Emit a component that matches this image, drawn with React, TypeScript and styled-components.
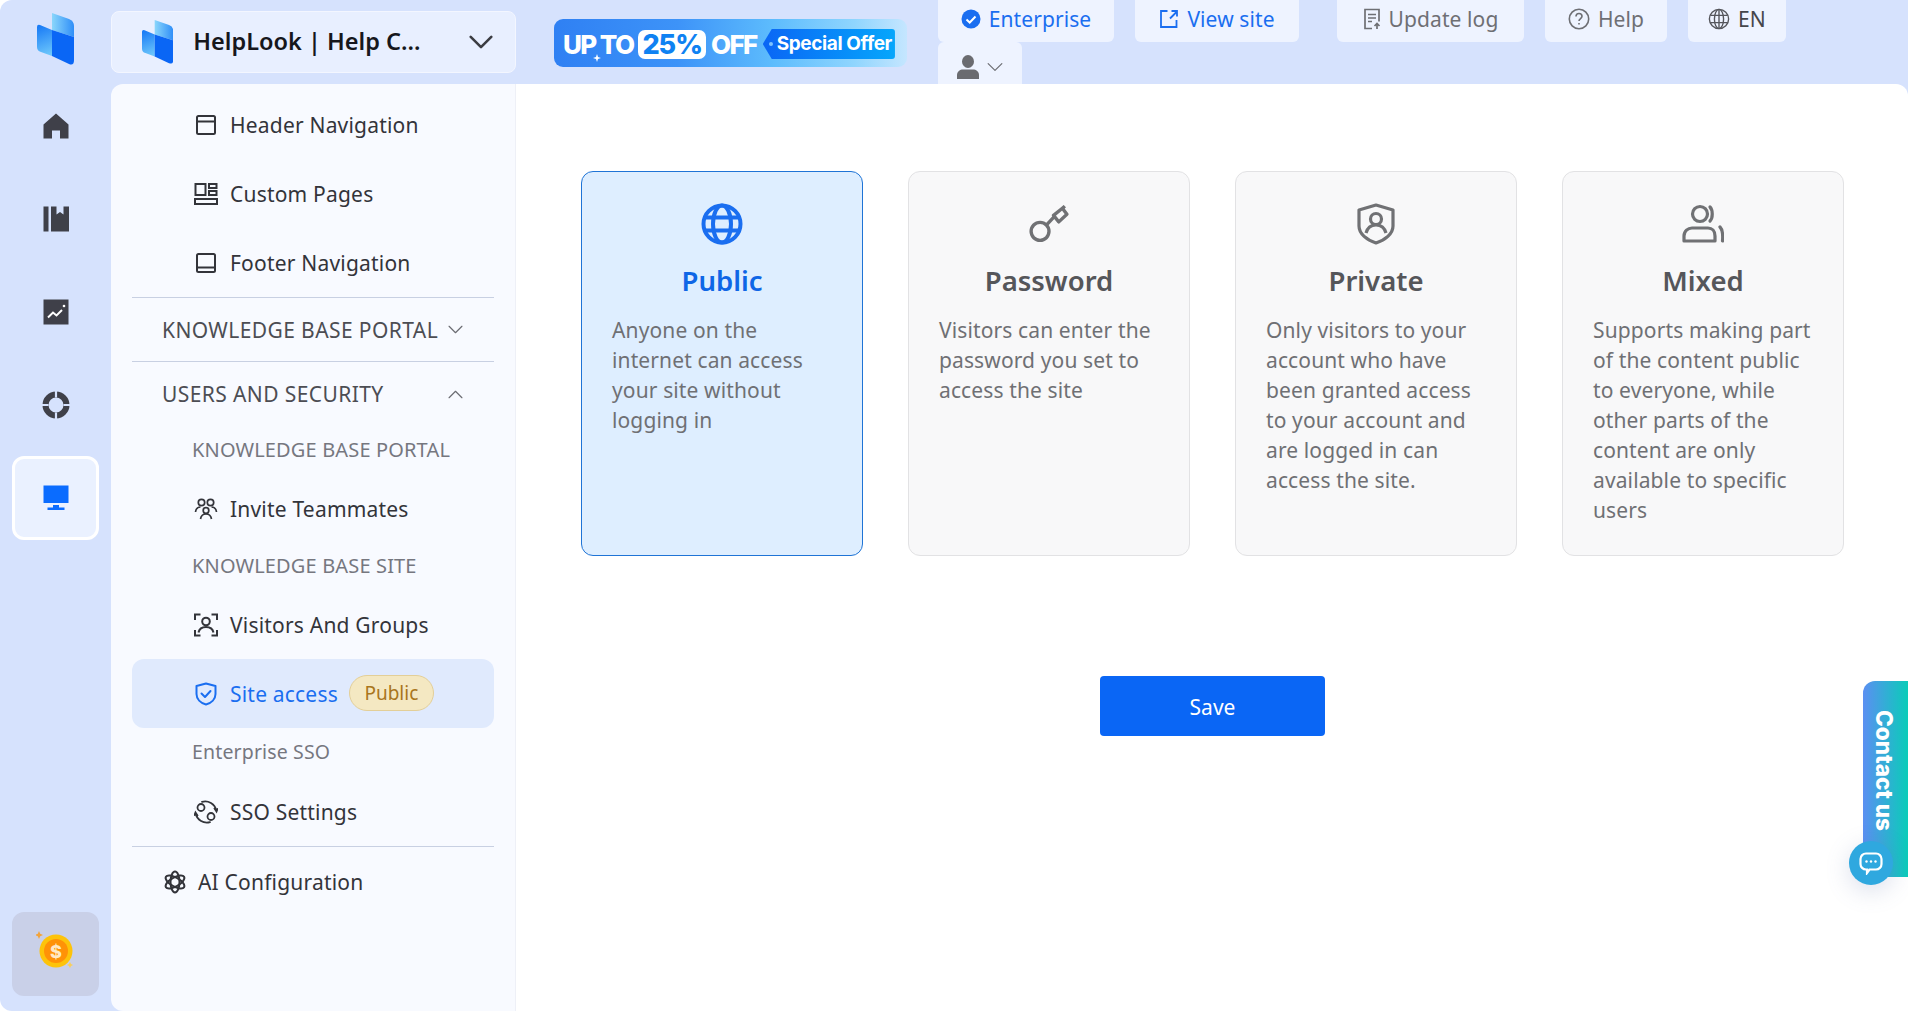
import React from "react";
import styled, { createGlobalStyle } from "styled-components";

const GlobalStyle = createGlobalStyle`
    html, body, #root {
        margin: 0;
        padding: 0;
        height: 100%;
        background: #fff;
    }
    body {
        font-family: "Noto Sans", "Open Sans", Arial, sans-serif;
        color: #33343a;
        overflow: hidden;
    }
`;

const Page = styled.div`
    display: grid;
    grid-template-columns: 111px 405px 1fr;
    grid-template-rows: 84px 927px;
    height: 1011px;
    background: #d6e2fd;
    border-radius: 12px 0 0 12px;
    overflow: hidden;
`;

const LogoCell = styled.div`
    display: flex;
    justify-content: center;
    align-items: flex-start;
    padding-top: 13px;
`;

const BrandCell = styled.div`
    padding: 11px 0;
`;

const BrandBox = styled.div`
    display: flex;
    align-items: center;
    height: 100%;
    box-sizing: border-box;
    padding: 0 22px 0 30px;
    background: #e8efff;
    border: 1px solid #f3f6ff;
    border-radius: 8px;
`;

const BrandName = styled.span`
    flex: 1;
    margin: 0 0 2px 20px;
    font-size: 23.5px;
    font-weight: 600;
    color: #16171c;
    white-space: nowrap;
`;

const HeaderCell = styled.div`
    display: flex;
    align-items: flex-start;
`;

const Banner = styled.div`
    display: flex;
    align-items: center;
    gap: 5px;
    flex: none;
    width: 353px;
    height: 48px;
    margin: 19px 0 0 38px;
    padding: 2px 0 0 9px;
    box-sizing: border-box;
    border-radius: 9px;
    background: linear-gradient(90deg, #2f80f3 0%, #3d93f8 35%, #5dbcfd 62%, #8fd5fe 85%, #c5e6ff 100%);
    font-family: Inter, "Noto Sans", sans-serif;
    font-weight: 800;
    color: #fff;
`;

const BannerWord = styled.span`
    position: relative;
    font-size: 26px;
    letter-spacing: -1.6px;
    white-space: nowrap;
`;

const SparkleMark = styled.svg`
    position: absolute;
    left: 30px;
    top: 25px;
`;

const BannerPill = styled.span`
    padding: 1px 4px;
    background: #fff;
    border-radius: 7px;
    color: #0f82f2;
    font-size: 27px;
    line-height: 27px;
    letter-spacing: -1px;
`;

const BannerTag = styled.span`
    position: relative;
    margin-left: 1px;
    padding: 0 3px 0 14px;
    height: 30px;
    line-height: 30px;
    font-size: 19px;
    font-weight: 700;
    letter-spacing: -0.4px;
    white-space: nowrap;
    background: linear-gradient(90deg, #0a66f5, #06a6fb);
    clip-path: polygon(9px 0, 100% 0, 100% 100%, 9px 100%, 0 50%);
    border-radius: 3px;

    &::before {
        content: "";
        position: absolute;
        left: 6px;
        top: 13px;
        width: 4px;
        height: 4px;
        border-radius: 50%;
        background: #7cc4ff;
    }
`;

const Tabs = styled.div`
    display: flex;
    flex-wrap: wrap;
    width: 900px;
    margin-left: 31px;
`;

const Tab = styled.a<{ $tone?: "blue" | "gray" | "dark"; $gapRight: number; $width: number; $user?: boolean }>`
    display: flex;
    align-items: center;
    justify-content: center;
    gap: 8px;
    width: ${(p) => p.$width}px;
    height: 42px;
    box-sizing: border-box;
    padding: ${(p) => (p.$user ? "8px 0 0" : "0 0 4px")};
    margin-right: ${(p) => p.$gapRight}px;
    background: #eef3ff;
    border-radius: ${(p) => (p.$user ? "6px 6px 0 0" : "0 0 6px 6px")};
    font-size: 21px;
    letter-spacing: 0.1px;
    white-space: nowrap;
    color: ${(p) => (p.$tone === "blue" ? "#1a6ef0" : p.$tone === "dark" ? "#45464b" : "#6e6f74")};
`;

const Rail = styled.nav`
    display: flex;
    flex-direction: column;
    align-items: center;
    gap: 9px;
    padding-bottom: 15px;
`;

const RailItem = styled.div<{ $active?: boolean }>`
    display: flex;
    align-items: center;
    justify-content: center;
    width: 87px;
    height: 84px;
    box-sizing: border-box;
    border-radius: 12px;
    border: 3px solid ${(p) => (p.$active ? "#fff" : "transparent")};
    background: ${(p) => (p.$active ? "#eaf1ff" : "transparent")};
`;

const CoinItem = styled(RailItem)`
    margin-top: auto;
    padding-bottom: 6px;
    background: #c9d0e8;
    border-color: #c9d0e8;
`;

const SidePanel = styled.aside`
    box-sizing: border-box;
    padding: 6px 21px 0;
    background: #f8faff;
    border-right: 1px solid #eef0f7;
    border-radius: 12px 0 0 12px;
`;

const NavRow = styled.div<{ $active?: boolean; $top?: boolean }>`
    display: flex;
    align-items: center;
    height: 69px;
    padding-left: ${(p) => (p.$top ? "31px" : "62px")};
    border-radius: 12px;
    font-size: 21px;
    letter-spacing: 0.2px;
    white-space: nowrap;
    background: ${(p) => (p.$active ? "#e0eafd" : "transparent")};
    color: ${(p) => (p.$active ? "#1a6ef0" : "#33343a")};
`;

const NavIcon = styled.span<{ $gap: number }>`
    display: flex;
    width: 24px;
    margin-right: ${(p) => p.$gap}px;
    justify-content: center;
    flex: none;
`;

const SectionRow = styled.div<{ $height: number }>`
    display: flex;
    align-items: center;
    height: ${(p) => p.$height}px;
    padding-left: 30px;
    font-size: 21px;
    letter-spacing: 0.4px;
    color: #4c4d53;
    white-space: nowrap;
`;

const SectionChevron = styled.span`
    position: absolute;
    left: 448px;
    display: flex;
`;

const SubLabel = styled.div<{ $height: number; $size?: number }>`
    display: flex;
    align-items: center;
    height: ${(p) => p.$height}px;
    padding: 0 0 2px 60px;
    box-sizing: border-box;
    font-size: ${(p) => p.$size ?? 20}px;
    letter-spacing: 0.15px;
    color: #76777f;
    white-space: nowrap;
`;

const Divider = styled.div`
    height: 1px;
    background: #c8d0e2;
`;

const Badge = styled.span`
    display: inline-flex;
    align-items: center;
    margin: 0 0 1px 11px;
    height: 36px;
    padding: 0 14.5px;
    border-radius: 18px;
    background: #f4e8c2;
    border: 1px solid #e3cf98;
    box-sizing: border-box;
    font-size: 19px;
    letter-spacing: 0;
    color: #a9761c;
`;

const Main = styled.main`
    display: flex;
    flex-direction: column;
    align-items: center;
    padding: 87px 64px 0 65px;
    background: #fff;
    border-radius: 0 12px 0 0;
`;

const CardGrid = styled.div`
    display: grid;
    grid-template-columns: repeat(4, 1fr);
    gap: 45px;
    width: 100%;
`;

const Card = styled.div<{ $active?: boolean }>`
    display: flex;
    flex-direction: column;
    align-items: center;
    height: 385px;
    box-sizing: border-box;
    padding: 30px 30px 0;
    border-radius: 12px;
    border: 1px solid ${(p) => (p.$active ? "#1f74d6" : "#e2e2e4")};
    background: ${(p) => (p.$active ? "#deeeff" : "#f8f8f9")};
`;

const CardIcon = styled.div`
    display: flex;
    align-items: center;
    justify-content: center;
    height: 44px;
`;

const CardTitle = styled.h3<{ $active?: boolean }>`
    margin: 16px 0 15px;
    font-size: 27.5px;
    line-height: 38px;
    font-weight: 600;
    color: ${(p) => (p.$active ? "#0e66e6" : "#55565a")};
`;

const CardText = styled.p`
    width: 100%;
    margin: 0;
    font-size: 21px;
    letter-spacing: 0.12px;
    line-height: 30px;
    color: #6f7074;
`;

const SaveButton = styled.button`
    width: 225px;
    height: 60px;
    margin-top: 120px;
    padding-top: 2px;
    border: 0;
    border-radius: 4px;
    background: #0a66f5;
    color: #fff;
    font: inherit;
    font-size: 21px;
`;

const ContactTab = styled.div`
    position: fixed;
    right: 0;
    top: 681px;
    width: 45px;
    height: 196px;
    box-sizing: border-box;
    padding: 29px 3px 0 0;
    display: flex;
    justify-content: flex-start;
    align-items: center;
    border-radius: 12px 0 0 12px;
    background: linear-gradient(90deg, #5b8ff2, #0accb9);
    font-family: Inter, sans-serif;
    font-size: 22.5px;
    font-weight: 800;
    color: #fff;
    writing-mode: vertical-rl;
    white-space: nowrap;
    line-height: 42px;
`;

const ContactBubble = styled.div`
    position: fixed;
    left: 1849px;
    top: 841px;
    width: 44px;
    height: 44px;
    display: flex;
    align-items: center;
    justify-content: center;
    border-radius: 50%;
    background: #2fa8df;
    box-shadow: 0 6px 24px rgba(90, 110, 170, 0.22);
`;

type IconProps = { c?: string };

const LogoMark = ({ h }: { h: number }) => (
    <svg width={(h * 37) / 52} height={h} viewBox="0 0 37 52">
        <defs>
            <linearGradient id={`lg-a-${h}`} x1="0" y1="0" x2="1" y2="0">
                <stop offset="0" stopColor="#8ad6fb" />
                <stop offset="1" stopColor="#2f8ef8" />
            </linearGradient>
            <linearGradient id={`lg-b-${h}`} x1="0.4" y1="0" x2="0.6" y2="1">
                <stop offset="0" stopColor="#1a7cf6" />
                <stop offset="1" stopColor="#6cc6fb" />
            </linearGradient>
        </defs>
        <path d="M15 0 32 6Q37 8 37 13V24L15 17z" fill={`url(#lg-a-${h})`} />
        <path d="M0 14Q0 11 3 12L15 17V43L4 39Q0 38 0 34z" fill={`url(#lg-b-${h})`} />
        <path d="M15 17 37 24V47Q37 53 32 51L15 43z" fill="#0a66f5" />
    </svg>
);

const Chevron = ({ size = 14, c = "#55565c", up = false, w = 1.4 }: IconProps & { size?: number; up?: boolean; w?: number }) => (
    <svg width={size} height={size} viewBox="0 0 14 14" fill="none" stroke={c} strokeWidth={w} strokeLinecap="round" strokeLinejoin="round">
        <path d={up ? "M1 10 7 4l6 6" : "M1 4l6 6 6-6"} />
    </svg>
);

const line = "#33343a";

const HeaderNavIcon = () => (
    <svg width="22" height="22" viewBox="0 0 22 22" fill="none" stroke={line} strokeWidth="2">
        <rect x="2" y="2" width="18" height="18" rx="1.5" />
        <path d="M2 7.5h18" />
    </svg>
);
const CustomPagesIcon = () => (
    <svg width="24" height="24" viewBox="0 0 24 24" fill="none" stroke={line} strokeWidth="2">
        <rect x="1.5" y="2" width="10" height="11" />
        <rect x="15" y="2" width="7.5" height="4" />
        <rect x="15" y="9" width="7.5" height="4" />
        <rect x="1" y="17" width="22" height="5" />
    </svg>
);
const FooterNavIcon = () => (
    <svg width="22" height="22" viewBox="0 0 22 22" fill="none" stroke={line} strokeWidth="2">
        <rect x="2" y="2" width="18" height="18" rx="1.5" />
        <path d="M2 15.5h18" />
    </svg>
);
const TeamIcon = () => (
    <svg width="24" height="24" viewBox="0 0 24 24" fill="none" stroke={line} strokeWidth="1.7">
        <circle cx="7.5" cy="5.5" r="3.2" />
        <circle cx="16.5" cy="5.5" r="3.2" />
        <circle cx="12" cy="13.5" r="2.8" />
        <path d="M1.5 15c.4-3 2.6-5 5-5M22.5 15c-.4-3-2.6-5-5-5M6.5 22c.5-3.200 2.800-5 5.500-5s5 1.800 5.500 5" />
    </svg>
);
const VisitorsIcon = () => (
    <svg width="24" height="24" viewBox="0 0 24 24" fill="none" stroke={line} strokeWidth="2">
        <path d="M1 7V1.500h5.500M17.500 1.500H23V7M23 17v5.500h-5.500M6.500 22.500H1V17" />
        <circle cx="12" cy="8.500" r="3.800" />
        <path d="M4.500 19.500c.8-3.800 3.800-5.500 7.500-5.500s6.700 1.700 7.500 5.500" />
    </svg>
);
const SiteAccessIcon = () => (
    <svg width="22" height="24" viewBox="0 0 22 24" fill="none" stroke="#1a6ef0" strokeWidth="2" strokeLinejoin="round" strokeLinecap="round">
        <path d="M11 1.500 20.500 4v8c0 5-4 9-9.500 10.500C5.500 21 1.500 17 1.500 12V4z" />
        <path d="M6.500 11.500 10 15l5.500-6" />
    </svg>
);
const SsoIcon = () => (
    <svg width="24" height="24" viewBox="0 0 24 24" fill="none" stroke={line} strokeWidth="1.8" strokeLinecap="round">
        <circle cx="7" cy="7.500" r="3.500" />
        <circle cx="17" cy="16.500" r="3.500" />
        <path d="M8 1.800C14 0 21 3.500 22.500 11M16 22.200C10 24 3 20.500 1.500 13M20.500 8.500 22.500 11.500l1-2.500M3.500 15.500 1.500 12.500l-1 2.500" />
    </svg>
);
const AiIcon = () => (
    <svg width="24" height="24" viewBox="0 0 24 24" fill="none" stroke={line} strokeWidth="2">
        <ellipse cx="12" cy="12" rx="4.500" ry="10.500" />
        <ellipse cx="12" cy="12" rx="4.500" ry="10.500" transform="rotate(60 12 12)" />
        <ellipse cx="12" cy="12" rx="4.500" ry="10.500" transform="rotate(120 12 12)" />
    </svg>
);

const railColor = "#3f4049";

const HomeIcon = () => (
    <svg width="26" height="26" viewBox="0 0 26 26" fill={railColor}>
        <path d="M13 .5 25.500 11.500V25.500H17V17.500H9V25.500H.5V11.500z" />
    </svg>
);
const BookIcon = () => (
    <svg width="26" height="26" viewBox="0 0 26 26" fill={railColor}>
        <rect x="0.500" y="0.500" width="5" height="25" />
        <path d="M8 .5h5.500v8l3.500-2.500 3.500 2.500v-8h5.500v25H8z" />
    </svg>
);
const ChartIcon = () => (
    <svg width="26" height="26" viewBox="0 0 26 26">
        <rect x="0.500" y="0.500" width="25" height="25" fill={railColor} />
        <path d="M5 18.500 10 13.500l3.500 3L19 11" fill="none" stroke="#fff" strokeWidth="2" />
        <circle cx="21" cy="7" r="1.300" fill="#fff" />
    </svg>
);
const BuoyIcon = () => (
    <svg width="28" height="28" viewBox="0 0 28 28" fill="none">
        <circle cx="14" cy="14" r="10.500" stroke={railColor} strokeWidth="6" />
        <g stroke="#d6e2fd" strokeWidth="2.200">
            <path d="M14 0v6.500M14 21.500V28M0 14h6.500M21.500 14H28" />
        </g>
    </svg>
);
const MonitorIcon = () => (
    <svg width="26" height="26" viewBox="0 0 26 26" fill="#0a6cff">
        <rect x="0.500" y="0.500" width="25" height="17.500" />
        <path d="M10 20h6v2.500h5.500V25H4.500v-2.500H10z" />
    </svg>
);
const CoinIcon = () => (
    <svg width="40" height="40" viewBox="-2 -2 40 40">
        <circle cx="18" cy="18" r="16.500" fill="#fdc30a" />
        <circle cx="18" cy="18" r="12" fill="#ff9207" />
        <text x="18" y="24.500" textAnchor="middle" fontFamily="Inter, sans-serif" fontWeight="800" fontSize="18" fill="#ffe9c4">$</text>
        <path d="M1 -2 2.200 .8 5 2 2.200 3.200 1 6-.2 3.200-3 2-.2 .8z" fill="#f3a43c" />
        <path d="M32 29l1 2 2 1-2 1-1 2-1-2-2-1 2-1z" fill="#f8cf5a" />
    </svg>
);

const CheckBadgeIcon = () => (
    <svg width="20" height="20" viewBox="0 0 20 20">
        <circle cx="10" cy="10" r="9.500" fill="#1a6ef0" />
        <path d="M5.500 10.500 8.700 13.500 14.500 7.500" fill="none" stroke="#fff" strokeWidth="2" />
    </svg>
);
const ExternalIcon = () => (
    <svg width="20" height="20" viewBox="0 0 20 20" fill="none" stroke="#1a6ef0" strokeWidth="1.800">
        <path d="M8.500 2H2v16h15.500v-7M11 9.500 18 2.500M12.500 2H18v5.500" />
    </svg>
);
const LogIcon = () => (
    <svg width="18" height="22" viewBox="0 0 18 22" fill="none" stroke="#6e6f74" strokeWidth="1.700">
        <path d="M9 20.500H2V1.500h14v12" />
        <path d="M5 6.500h8M5 10h8M5 13.500h4M14 21v-5M11.500 18l2.500-2.500 2.500 2.500" />
    </svg>
);
const HelpIcon = () => (
    <svg width="22" height="22" viewBox="0 0 22 22" fill="none" stroke="#6e6f74" strokeWidth="1.600">
        <circle cx="11" cy="11" r="9.700" />
        <path d="M8 8.500c0-1.800 1.300-3 3-3s3 1.200 3 2.800c0 2.200-3 2.400-3 4.700" />
        <path d="M11 15v1.600" />
    </svg>
);
const GlobeLineIcon = () => (
    <svg width="22" height="22" viewBox="0 0 24 24" fill="none" stroke="#55565c" strokeWidth="1.500">
        <circle cx="12" cy="12" r="10.500" />
        <ellipse cx="12" cy="12" rx="5" ry="10.500" />
        <path d="M12 1.500v21M2.500 8h19M2.500 16h19" />
    </svg>
);
const UserIcon = () => (
    <svg width="22" height="24" viewBox="0 0 22 24" fill="#6a6b70">
        <ellipse cx="11" cy="6.500" rx="6" ry="6.500" />
        <path d="M0 24v-4c0-3.500 3-5.500 6-5.500h10c3 0 6 2 6 5.500v4z" />
    </svg>
);

const GlobeCardIcon = () => (
    <svg width="42" height="42" viewBox="0 0 42 42" fill="none" stroke="#1a6ef0" strokeWidth="4">
        <circle cx="21" cy="21" r="18.500" />
        <ellipse cx="21" cy="21" rx="9" ry="18.500" />
        <path d="M3 14.500h36M3 27.500h36" />
    </svg>
);
const KeyCardIcon = () => (
    <svg width="40" height="38" viewBox="0 0 38 36" fill="none" stroke="#707174" strokeWidth="3.200" strokeLinejoin="round">
        <circle cx="10.500" cy="25" r="8.500" />
        <path d="M16.500 19 24 11M34 1 32 3" />
        <path d="M23.300 9.800 31.700 3 36 8.700 28.300 16z" />
    </svg>
);
const ShieldCardIcon = () => (
    <svg width="38" height="42" viewBox="0 0 38 42" fill="none" stroke="#707174" strokeWidth="3.200" strokeLinejoin="round">
        <path d="M19 2 36 7v16c0 8-8 14-17 17C10 37 2 31 2 23V7z" />
        <circle cx="19" cy="16" r="5.500" />
        <path d="M9 30c1.500-5.500 5.500-8 10-8s8.500 2.500 10 8" />
    </svg>
);
const MixedCardIcon = () => (
    <svg width="42" height="40" viewBox="0 0 42 40" fill="none" stroke="#707174" strokeWidth="3.200" strokeLinecap="round">
        <circle cx="18" cy="10" r="7.500" />
        <path d="M28 3c3 3 3 11 0 14" />
        <path d="M2 37v-5c0-5 4-8 8-8h16c4 0 7 3 7 8v5z" strokeLinejoin="round" />
        <path d="M38 23c2.500 2.500 3 8 2.500 14" />
    </svg>
);
const ChatIcon = () => (
    <svg width="24" height="24" viewBox="0 0 24 24" fill="none" stroke="#fff" strokeWidth="2.200">
        <path d="M7 2.500h10a5.500 5.500 0 0 1 5.500 5.500v5a5.500 5.500 0 0 1-5.500 5.500H10.500L8 22v-3.500H7A5.500 5.500 0 0 1 1.500 13V8A5.500 5.500 0 0 1 7 2.500z" />
        <circle cx="7.500" cy="10.500" r="1.200" fill="#fff" stroke="none" />
        <circle cx="12" cy="10.500" r="1.200" fill="#fff" stroke="none" />
        <circle cx="16.500" cy="10.500" r="1.200" fill="#fff" stroke="none" />
    </svg>
);

const cards = [
    {
        title: "Public",
        icon: <GlobeCardIcon />,
        text: "Anyone on the internet can access your site without logging in",
        active: true,
    },
    {
        title: "Password",
        icon: <KeyCardIcon />,
        text: "Visitors can enter the password you set to access the site",
    },
    {
        title: "Private",
        icon: <ShieldCardIcon />,
        text: "Only visitors to your account who have been granted access to your account and are logged in can access the site.",
    },
    {
        title: "Mixed",
        icon: <MixedCardIcon />,
        text: "Supports making part of the content public to everyone, while other parts of the content are only available to specific users",
    },
];

const App: React.FC = () => {
    return (
        <Page>
            <GlobalStyle />
            <LogoCell>
                <LogoMark h={52} />
            </LogoCell>
            <BrandCell>
                <BrandBox>
                    <LogoMark h={44} />
                    <BrandName>HelpLook | Help C...</BrandName>
                    <Chevron size={24} c="#3b3c42" w={1.5} />
                </BrandBox>
            </BrandCell>
            <HeaderCell>
                <Banner>
                    <BannerWord>
                        UP TO
                        <SparkleMark width="8" height="8" viewBox="0 0 8 8">
                            <path d="M4 0 5 3 8 4 5 5 4 8 3 5 0 4 3 3z" fill="#fff" />
                        </SparkleMark>
                    </BannerWord>
                    <BannerPill>25%</BannerPill>
                    <BannerWord>OFF</BannerWord>
                    <BannerTag>Special Offer</BannerTag>
                </Banner>
                <Tabs>
                    <Tab $tone="blue" $width={176} $gapRight={21}>
                        <CheckBadgeIcon />
                        Enterprise
                    </Tab>
                    <Tab $tone="blue" $width={164} $gapRight={38}>
                        <ExternalIcon />
                        View site
                    </Tab>
                    <Tab $width={187} $gapRight={21}>
                        <LogIcon />
                        Update log
                    </Tab>
                    <Tab $width={122} $gapRight={21}>
                        <HelpIcon />
                        Help
                    </Tab>
                    <Tab $tone="dark" $width={98} $gapRight={21}>
                        <GlobeLineIcon />
                        EN
                    </Tab>
                    <Tab $width={84} $gapRight={0} $user>
                        <UserIcon />
                        <Chevron size={16} c="#6a6b70" w={1} />
                    </Tab>
                </Tabs>
            </HeaderCell>

            <Rail>
                <RailItem><HomeIcon /></RailItem>
                <RailItem><BookIcon /></RailItem>
                <RailItem><ChartIcon /></RailItem>
                <RailItem><BuoyIcon /></RailItem>
                <RailItem $active><MonitorIcon /></RailItem>
                <CoinItem><CoinIcon /></CoinItem>
            </Rail>

            <SidePanel>
                <NavRow><NavIcon $gap={12}><HeaderNavIcon /></NavIcon>Header Navigation</NavRow>
                <NavRow><NavIcon $gap={12}><CustomPagesIcon /></NavIcon>Custom Pages</NavRow>
                <NavRow><NavIcon $gap={12}><FooterNavIcon /></NavIcon>Footer Navigation</NavRow>
                <Divider />
                <SectionRow $height={63}>
                    KNOWLEDGE BASE PORTAL
                    <SectionChevron><Chevron size={15} c="#6b6c72" w={1.1} /></SectionChevron>
                </SectionRow>
                <Divider />
                <SectionRow $height={64}>
                    USERS AND SECURITY
                    <SectionChevron><Chevron size={15} c="#6b6c72" w={1.1} up /></SectionChevron>
                </SectionRow>
                <SubLabel $height={48}>KNOWLEDGE BASE PORTAL</SubLabel>
                <NavRow><NavIcon $gap={12}><TeamIcon /></NavIcon>Invite Teammates</NavRow>
                <SubLabel $height={47}>KNOWLEDGE BASE SITE</SubLabel>
                <NavRow><NavIcon $gap={12}><VisitorsIcon /></NavIcon>Visitors And Groups</NavRow>
                <NavRow $active>
                    <NavIcon $gap={12}><SiteAccessIcon /></NavIcon>
                    Site access
                    <Badge>Public</Badge>
                </NavRow>
                <SubLabel $height={49} $size={19.5}>Enterprise SSO</SubLabel>
                <NavRow><NavIcon $gap={12}><SsoIcon /></NavIcon>SSO Settings</NavRow>
                <Divider />
                <NavRow $top><NavIcon $gap={11}><AiIcon /></NavIcon>AI Configuration</NavRow>
            </SidePanel>

            <Main>
                <CardGrid>
                    {cards.map((card) => (
                        <Card key={card.title} $active={card.active}>
                            <CardIcon>{card.icon}</CardIcon>
                            <CardTitle $active={card.active}>{card.title}</CardTitle>
                            <CardText>{card.text}</CardText>
                        </Card>
                    ))}
                </CardGrid>
                <SaveButton>Save</SaveButton>
            </Main>

            <ContactTab>Contact us</ContactTab>
            <ContactBubble><ChatIcon /></ContactBubble>
        </Page>
    );
};

export default App;
